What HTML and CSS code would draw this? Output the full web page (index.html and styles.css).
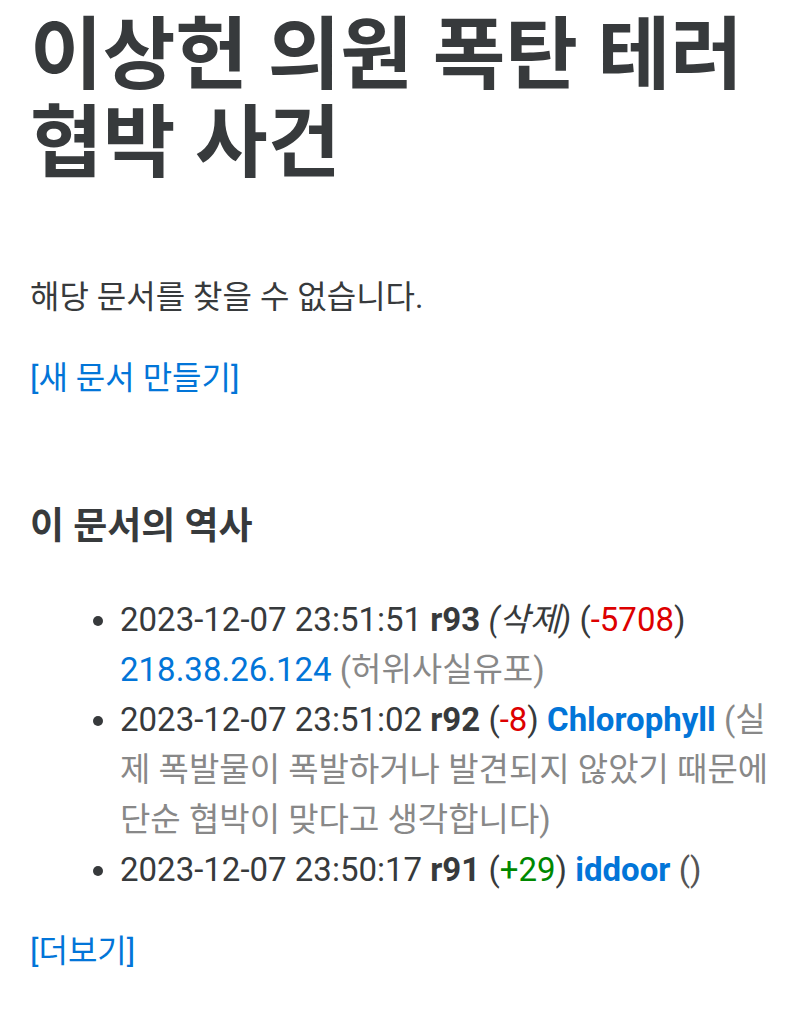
FILE: index.html
```html
<!DOCTYPE html>
<html lang="ko">
<head>
<meta charset="utf-8">
<link rel="stylesheet" href="styles.css">
</head>
<body>
<h1 class="title">이상헌 의원 폭탄 테러 협박 사건</h1>
<p class="msg">해당 문서를 찾을 수 없습니다.</p>
<p class="create"><a href="#" class="link">[새 문서 만들기]</a></p>
<h2 class="history-title">이 문서의 역사</h2>
<ul class="history">
<li>2023-12-07 23:51:51 <b>r93</b> <i>(삭제)</i> (<span class="minus">-5708</span>) <a href="#" class="link">218.38.26.124</a> <span class="comment">(허위사실유포)</span></li>
<li>2023-12-07 23:51:02 <b>r92</b> (<span class="minus">-8</span>) <a href="#" class="link user">Chlorophyll</a> <span class="comment">(실제 폭발물이 폭발하거나 발견되지 않았기 때문에 단순 협박이 맞다고 생각합니다)</span></li>
<li>2023-12-07 23:50:17 <b>r91</b> (<span class="plus">+29</span>) <a href="#" class="link user">iddoor</a> <span class="empty">()</span></li>
</ul>
<p class="more"><a href="#" class="link">[더보기]</a></p>
</body>
</html>
```

FILE: styles.css
```css
html, body {
  margin: 0;
  padding: 0;
  background: #fff;
}
body {
  padding: 0 24px 0 30px;
  font-family: "Roboto", "Noto Sans CJK KR", sans-serif;
  color: #373a3c;
}
.title {
  margin: 12px 0 0;
  font-size: 79px;
  line-height: 88px;
  font-weight: 700;
  color: #373a3c;
}
.msg {
  margin: 84px 0 0;
  font-size: 32px;
  line-height: 50px;
}
.create {
  margin: 31px 0 0;
  font-size: 32px;
  line-height: 50px;
}
.link {
  color: #0275d8;
  text-decoration: none;
}
.history-title {
  margin: 99px 0 0;
  font-size: 37px;
  line-height: 50px;
  font-weight: 700;
}
.history {
  margin: 43px 0 0;
  padding-left: 90px;
  font-size: 33px;
  line-height: 50px;
  color: #373a3c;
}
.history b {
  font-weight: 700;
}
.user {
  font-weight: 700;
}
.minus {
  color: #d00;
}
.plus {
  color: #080;
}
.comment {
  color: #888;
}
.empty {
  color: #555;
}
.more {
  margin: 31px 0 0;
  font-size: 32px;
  line-height: 50px;
}
```
